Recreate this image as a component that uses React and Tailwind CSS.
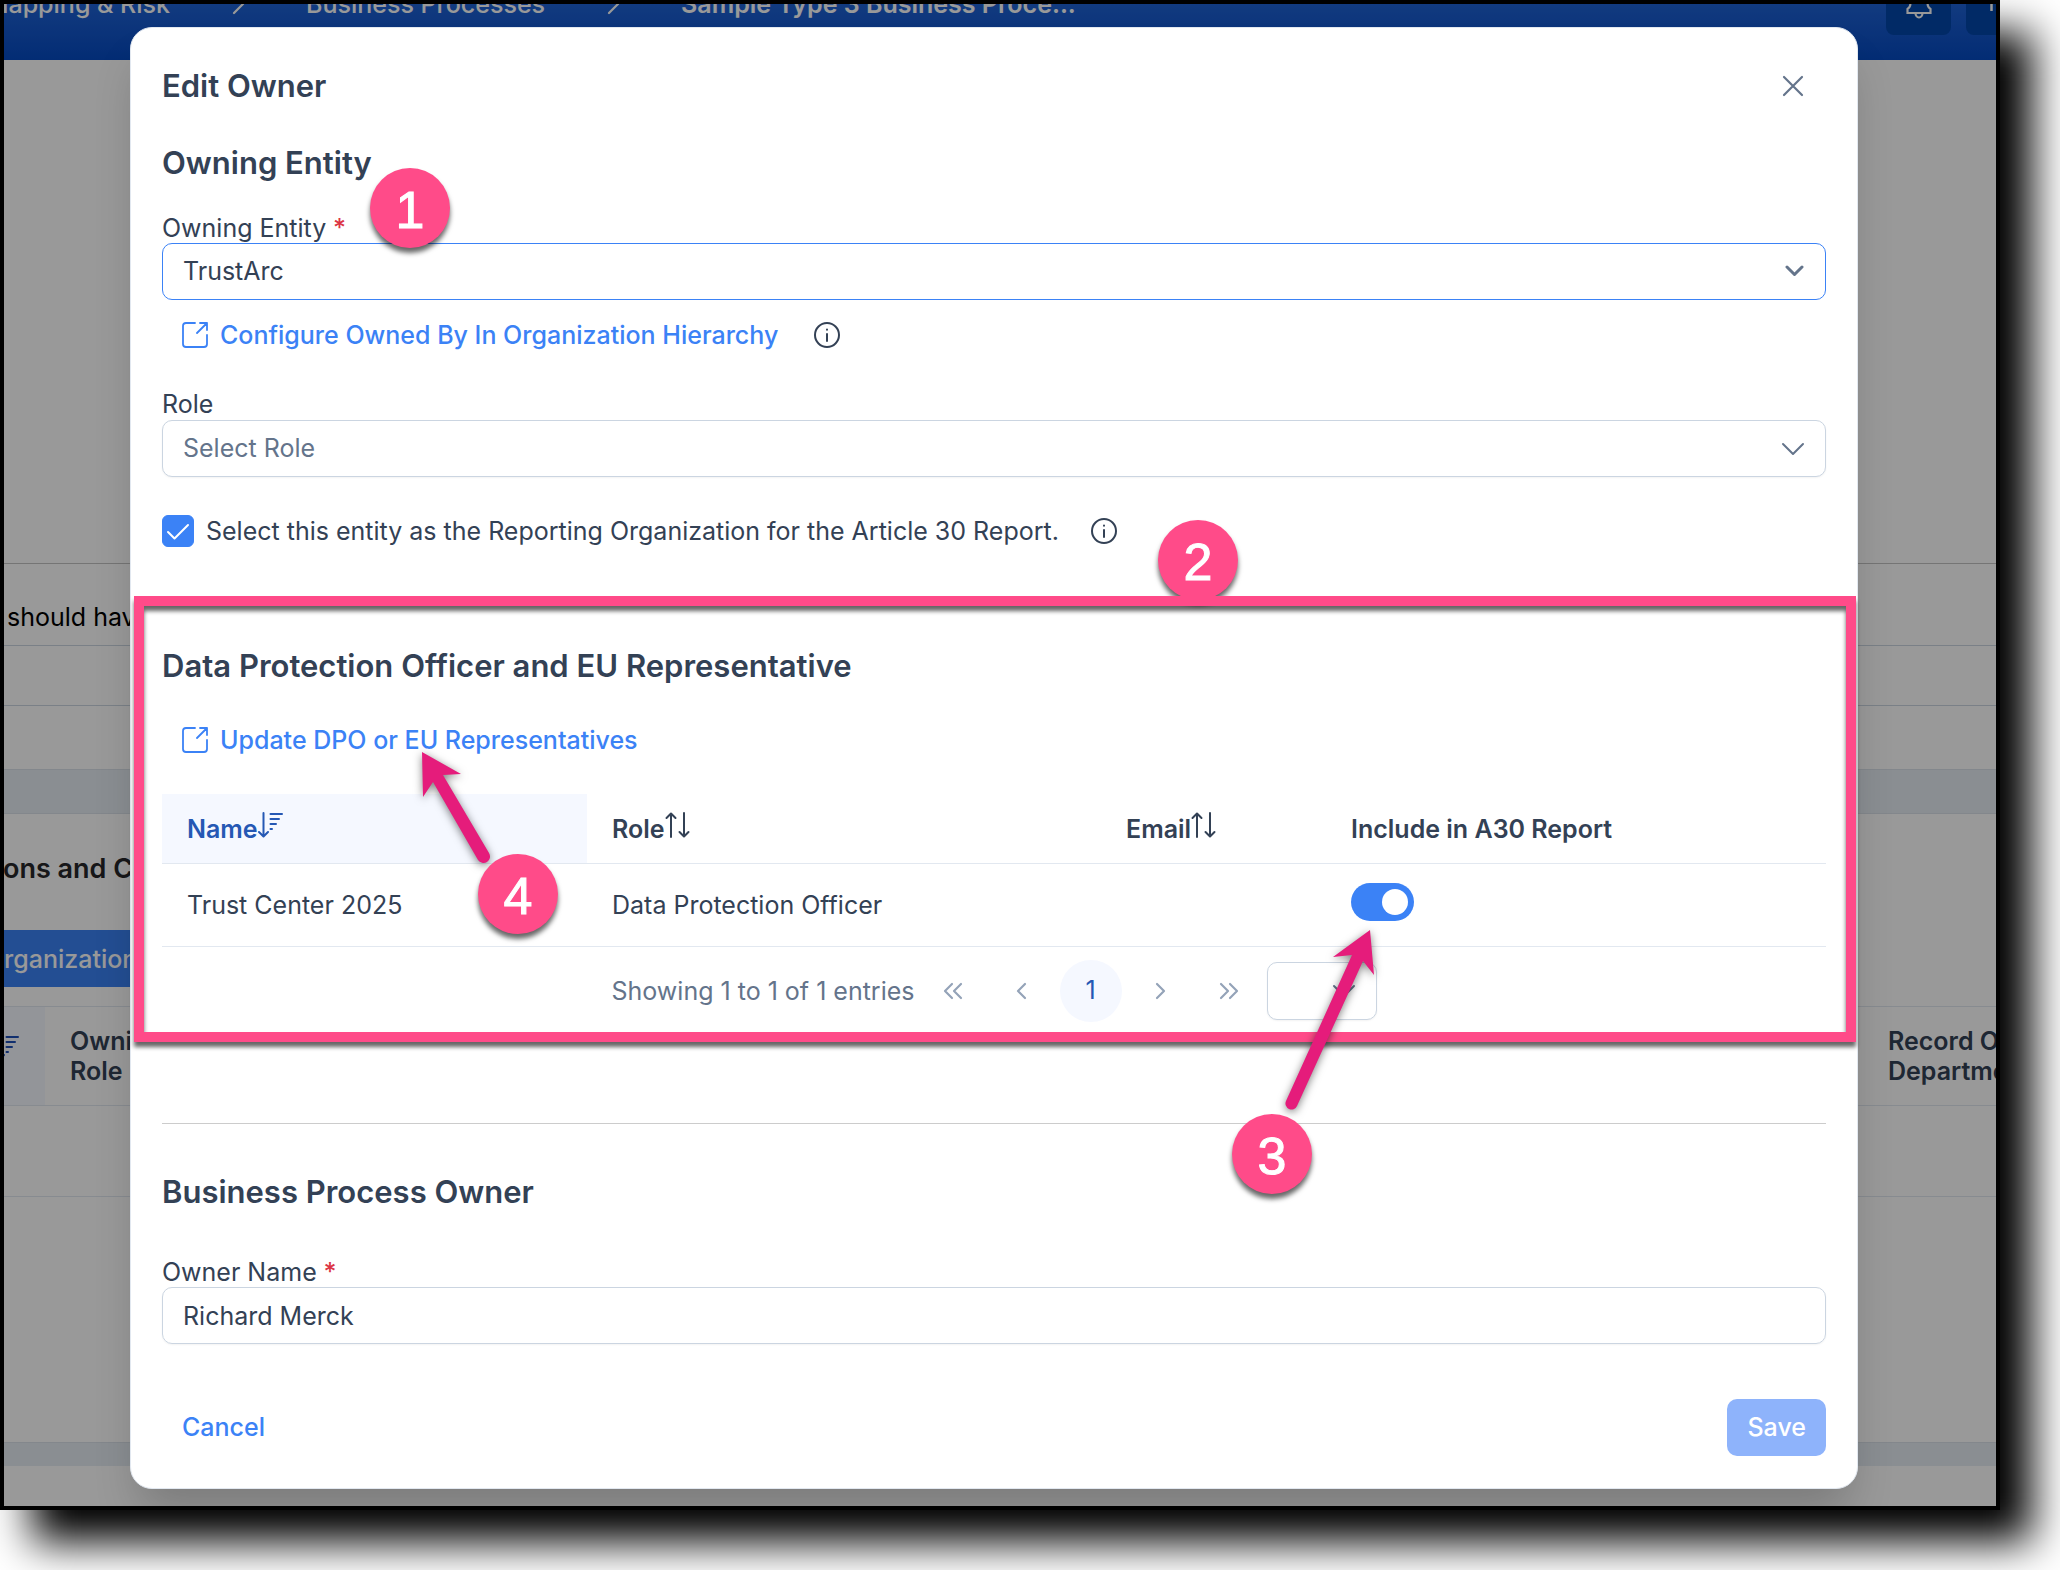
import React, { useState } from 'react';

const ExternalLinkIcon = () => (
    <svg className="h-[26px] w-[26px] shrink-0" viewBox="0 0 26 26" fill="none" stroke="currentColor" strokeWidth="1.8" strokeLinecap="round" strokeLinejoin="round">
        <path d="M13 1H4a3 3 0 0 0-3 3v18a3 3 0 0 0 3 3h18a3 3 0 0 0 3-3V13" />
        <path d="M18 1h7v7M25 1 15 11" />
    </svg>
);

const InfoIcon = () => (
    <svg className="h-[26px] w-[26px] shrink-0" viewBox="0 0 26 26" fill="none" stroke="currentColor" strokeWidth="2" strokeLinecap="round">
        <circle cx="13" cy="13" r="12" />
        <path d="M13 12v7M13 7.5v.3" />
    </svg>
);

const SortIcon = () => (
    <svg className="inline h-[26px] w-[25px] shrink-0 align-baseline" viewBox="0 0 25 26" fill="none" stroke="currentColor" strokeWidth="2" strokeLinecap="round" strokeLinejoin="round">
        <path d="M6 25V2M1.500 6 6 1.500 10.500 6" />
        <path d="M19 1v23M14.500 20 19 24.500 23.500 20" />
    </svg>
);

const SortAmountIcon = () => (
    <svg className="inline h-[26px] w-[25px] shrink-0 align-baseline" viewBox="0 0 25 26" fill="none" stroke="currentColor" strokeWidth="2" strokeLinecap="round" strokeLinejoin="round">
        <path d="M5.500 1v23M1 20l4.500 4.500L10 20" />
        <path d="M12.500 2H24M12.500 7H21M12.500 12H18M12.500 17H14" />
    </svg>
);

const Chevron = ({ d, className }) => (
    <svg className={className} viewBox="0 0 24 24" fill="none" stroke="currentColor" strokeWidth="2.200" strokeLinecap="round" strokeLinejoin="round">
        <path d={d} />
    </svg>
);

const Callout = ({ number, className }) => (
    <span className={`absolute z-20 flex h-20 w-20 items-center justify-center rounded-full bg-[#ff4b89] pt-1 font-['Liberation_Sans',sans-serif] text-[52px] leading-none text-white shadow-[0_5px_5px_rgba(0,0,0,0.6)] [-webkit-text-stroke:1px_white] ${className}`}>
        {number}
    </span>
);

const FieldLabel = ({ htmlFor, required, children }) => (
    <label htmlFor={htmlFor} className="block text-[25px] leading-[30px]">
        {children}
        {required && <span className="font-medium text-[#dc3545]"> *</span>}
    </label>
);

const PageButton = ({ label, d }) => (
    <button type="button" aria-label={label} className="flex h-[62px] w-[62px] items-center justify-center text-[#94a3b8]">
        <Chevron d={d} className="h-6 w-6" />
    </button>
);

// Page behind the dialog
const Backdrop = () => (
    <div className="absolute inset-0 flex flex-col overflow-hidden bg-white text-[25px] leading-[30px] text-[#27272a]">
        <header className="flex h-14 shrink-0 justify-between overflow-hidden bg-linear-to-b from-[#1e62d5] to-[#054ac2] text-white">
            <nav className="-mt-5 flex h-10 items-center whitespace-nowrap font-medium">
                <span className="flex w-[166px] justify-end">Mapping &amp; Risk</span>
                <Chevron d="M8 3l9 9-9 9" className="mx-14 h-6 w-6" />
                <span>Business Processes</span>
                <Chevron d="M8 3l9 9-9 9" className="mx-14 h-6 w-6" />
                <span className="font-semibold">Sample Type 3 Business Proce...</span>
            </nav>
            <div className="-mt-[33px] -mr-[35px] flex gap-[15px]">
                <button type="button" aria-label="Notifications" className="flex h-16 w-[65px] items-end justify-center rounded-lg bg-[#0346aa] pb-4">
                    <svg className="h-[30px] w-[26px]" viewBox="0 0 26 30" fill="none" stroke="currentColor" strokeWidth="2.200">
                        <path d="M1.500 24v-4c3-2 3-4 3-9a8.500 8.500 0 0 1 17 0c0 5 0 7 3 9v4zM9.500 24a3.500 4.500 0 0 0 7 0" />
                    </svg>
                </button>
                <button type="button" aria-label="Help" className="flex h-16 w-[65px] items-end justify-center rounded-lg bg-[#0346aa] pb-6">
                    <svg className="h-5 w-[18px]" viewBox="0 0 18 20" fill="none" stroke="currentColor" strokeWidth="2.500">
                        <path d="M1.500 0v20" />
                    </svg>
                </button>
            </div>
        </header>
        <div className="h-[504px] shrink-0 border-b border-[#c4c4c4]" />
        <p className="flex h-[82px] shrink-0 items-center border-b border-[#cbd5e1] pt-6 pl-[3px] text-black">should have</p>
        <div className="h-[60px] shrink-0 border-b border-[#cbd5e1]" />
        <div className="h-[63px] shrink-0" />
        <div className="h-[45px] shrink-0 border-y border-[#dbe2ea] bg-[#e7edf4]" />
        <h2 className="-ml-px flex h-[116px] shrink-0 items-center pb-[6px] text-[27px] font-semibold">ons and C</h2>
        <div className="flex h-[57px] w-[300px] shrink-0 items-center bg-[#3b82f6] font-medium text-white">rganization</div>
        <div className="mt-[19px] flex h-[100px] shrink-0 items-center justify-between border-y border-[#e2e8f0] font-semibold text-[#334155]">
            <div className="flex h-full items-center gap-[25px]">
                <div className="flex h-full w-[41px] items-center justify-end bg-[#f5f8ff] pr-[26px] pb-4 text-[#1d4fb8]">
                    <SortAmountIcon />
                </div>
                <p>Owning<br />Role</p>
            </div>
            <p className="w-[108px] overflow-hidden">
                <span className="block whitespace-nowrap">Record Of</span>
                <span className="block">Department</span>
            </p>
        </div>
        <div className="h-[91px] shrink-0 border-b border-[#e2e8f0]" />
        <div className="h-[245px] shrink-0" />
        <div className="h-6 shrink-0 border-t border-[#dbe2ea] bg-[#e7edf4]" />
        <div className="grow" />
    </div>
);

const OwningEntitySection = ({ reporting, setReporting }) => (
    <section className="relative mt-[37px]">
        <h2 className="text-[31px] leading-10 font-semibold">Owning Entity</h2>
        <div className="mt-[30px]">
            <FieldLabel htmlFor="owningEntity" required>Owning Entity</FieldLabel>
            <div className="relative">
                <select id="owningEntity" className="h-[57px] w-full appearance-none rounded-[10px] border border-[#3b82f6] bg-white px-5 text-[25px]">
                    <option>TrustArc</option>
                </select>
                <svg className="pointer-events-none absolute top-[22px] right-[22px] h-3 w-[19px] text-[#64748b]" viewBox="0 0 19 12" fill="none" stroke="currentColor" strokeWidth="3" strokeLinecap="round" strokeLinejoin="round">
                    <path d="M2 2l7.500 7.500L17 2" />
                </svg>
            </div>
        </div>
        <div className="mt-[19px] flex h-8 items-center pl-5">
            <a href="#hierarchy" className="flex items-center gap-3 text-[25px] leading-8 font-medium text-[#3b82f6]">
                <ExternalLinkIcon />
                Configure Owned By In Organization Hierarchy
            </a>
            <span className="ml-9"><InfoIcon /></span>
        </div>
        <div className="mt-[38px]">
            <FieldLabel htmlFor="role">Role</FieldLabel>
            <div className="relative mt-px">
                <select id="role" className="h-[57px] w-full appearance-none rounded-[10px] border border-[#cbd5e1] bg-white px-5 text-[25px] text-[#64748b] shadow-xs">
                    <option>Select Role</option>
                </select>
                <svg className="pointer-events-none absolute top-[22px] right-[21px] h-3.5 w-6 text-[#64748b]" viewBox="0 0 24 14" fill="none" stroke="currentColor" strokeWidth="2" strokeLinecap="round" strokeLinejoin="round">
                    <path d="M2 2l10 10L22 2" />
                </svg>
            </div>
        </div>
        <div className="mt-[38px] flex h-8 items-center">
            <span className="relative h-8 w-8">
                <input id="reporting" type="checkbox" checked={reporting} onChange={(e) => setReporting(e.target.checked)} className="block h-8 w-8 appearance-none rounded-md border border-[#cbd5e1] checked:border-[#3b82f6] checked:bg-[#3b82f6]" />
                {reporting && (
                    <svg className="pointer-events-none absolute inset-0 h-8 w-8" viewBox="0 0 32 32" fill="none" stroke="white" strokeWidth="2" strokeLinecap="round" strokeLinejoin="round">
                        <path d="M6 17l6.500 6.500L26 10" />
                    </svg>
                )}
            </span>
            <label htmlFor="reporting" className="ml-3 text-[25px] leading-8">Select this entity as the Reporting Organization for the Article 30 Report.</label>
            <span className="ml-8"><InfoIcon /></span>
        </div>
        <Callout number="1" className="top-[25px] left-[208px]" />
    </section>
);

const RepresentativeSection = ({ included, setIncluded }) => (
    <section className="relative mt-[99px]">
        <h2 className="text-[31px] leading-10 font-semibold">Data Protection Officer and EU Representative</h2>
        <a href="#representatives" className="mt-[38px] flex h-8 w-fit items-center gap-3 pl-5 text-[25px] leading-8 font-medium text-[#3b82f6]">
            <ExternalLinkIcon />
            Update DPO or EU Representatives
        </a>
        <table className="mt-[38px] w-full table-fixed border-separate border-spacing-0 text-left text-[25px] leading-8">
            <colgroup>
                <col className="w-[425px]" />
                <col className="w-[514px]" />
                <col className="w-[225px]" />
                <col />
            </colgroup>
            <thead>
                <tr className="h-[70px]">
                    <th className="border-b border-[#e2e8f0] bg-[#f5f8ff] px-[25px] font-semibold text-[#2558b4]">Name<SortAmountIcon /></th>
                    <th className="border-b border-[#e2e8f0] px-[25px] font-semibold">Role<SortIcon /></th>
                    <th className="border-b border-[#e2e8f0] px-[25px] font-semibold">Email<SortIcon /></th>
                    <th className="border-b border-[#e2e8f0] px-[25px] font-semibold">Include in A30 Report</th>
                </tr>
            </thead>
            <tbody>
                <tr className="h-[83px]">
                    <td className="border-b border-[#e2e8f0] px-[25px]">Trust Center 2025</td>
                    <td className="border-b border-[#e2e8f0] px-[25px]">Data Protection Officer</td>
                    <td className="border-b border-[#e2e8f0] px-[25px]"></td>
                    <td className="border-b border-[#e2e8f0] px-[25px] pb-[6px]">
                        <input type="checkbox" role="switch" aria-label="Include in A30 Report" checked={included} onChange={(e) => setIncluded(e.target.checked)} className="relative block h-[38px] w-[63px] appearance-none rounded-full bg-[#cbd5e1] before:absolute before:top-[6px] before:left-[6px] before:h-[26px] before:w-[26px] before:rounded-full before:bg-white checked:bg-[#3b82f6] checked:before:left-[31px]" />
                    </td>
                </tr>
            </tbody>
        </table>
        <div className="flex h-[88px] items-center justify-center gap-[7px]">
            <span className="text-[25px] leading-8 text-[#64748b]">Showing 1 to 1 of 1 entries</span>
            <PageButton label="First page" d="M11 5l-7 7 7 7M20 5l-7 7 7 7" />
            <PageButton label="Previous page" d="M15 5l-7 7 7 7" />
            <button type="button" className="h-[62px] w-[62px] rounded-full bg-[#f5f8ff] text-[25px] text-[#2558b4]">1</button>
            <PageButton label="Next page" d="M9 5l7 7-7 7" />
            <PageButton label="Last page" d="M4 5l7 7-7 7M13 5l7 7-7 7" />
            <div className="relative">
                <select aria-label="Rows per page" className="h-[58px] w-[110px] appearance-none rounded-[10px] border border-[#cbd5e1] bg-white shadow-xs" />
                <svg className="pointer-events-none absolute top-[22px] right-[21px] h-3.5 w-6 text-[#64748b]" viewBox="0 0 24 14" fill="none" stroke="currentColor" strokeWidth="2" strokeLinecap="round" strokeLinejoin="round">
                    <path d="M2 2l10 10L22 2" />
                </svg>
            </div>
        </div>

        {/* Annotations on top of the section */}
        <Callout number="2" className="-top-[126px] left-[996px]" />
        <div className="pointer-events-none absolute -top-[50px] -right-[30px] -bottom-[7px] -left-[28px] z-20 border-10 border-[#ff4b89] [filter:drop-shadow(0_5px_2px_rgba(0,0,0,0.6))]" />
        <svg className="pointer-events-none absolute top-[99px] left-[253px] z-20 h-[125px] w-[85px] overflow-visible [filter:drop-shadow(0_2px_4px_rgba(0,0,0,0.5))]" viewBox="415 745 85 125" fill="#e51c7b">
            <path d="M422 752l39 22-18 1 46 78a6 6 0 0 1-11 7l-45-78-10 15z" />
        </svg>
        <svg className="pointer-events-none absolute top-[277px] left-[1163px] z-20 h-[197px] w-[60px] overflow-visible [filter:drop-shadow(0_2px_4px_rgba(0,0,0,0.5))]" viewBox="1325 923 60 197" fill="#e51c7b">
            <path d="M1370 930l4 45-11-14-66 145a6 6 0 0 1-11-5l66-146-19 2z" />
        </svg>
        <Callout number="3" className="top-[468px] left-[1070px]" />
        <Callout number="4" className="top-[208px] left-[316px]" />
    </section>
);

const App = () => {
    const [reporting, setReporting] = useState(true);
    const [included, setIncluded] = useState(true);
    const [ownerName, setOwnerName] = useState('Richard Merck');

    return (
        <div className="flex min-h-screen overflow-hidden bg-white pr-[60px] pb-[60px] font-[Inter,sans-serif]">
            <div className="relative grow border-4 border-black shadow-[32px_32px_40px_#000]">
                <Backdrop />
                <div className="absolute inset-0 bg-black/40" />
                <div className="absolute inset-0 flex overflow-hidden pt-[23px] pr-[138px] pb-[17px] pl-[126px]">
                    <div className="grow rounded-[22px] shadow-[0_30px_45px_-9px_rgba(0,0,0,0.2)]" />
                </div>
                <div role="dialog" aria-labelledby="dialogTitle" className="relative mt-[23px] mr-[138px] mb-[17px] ml-[126px] rounded-[22px] border border-[#e2e8f0] bg-white px-[31px] pt-[38px] pb-8 text-[#334155]">
                    <div className="flex h-10 items-center justify-between">
                        <h1 id="dialogTitle" className="text-[31px] leading-10 font-semibold">Edit Owner</h1>
                        <button type="button" aria-label="Close" className="mr-[22px] text-[#64748b]">
                            <svg className="h-[22px] w-[22px]" viewBox="0 0 22 22" fill="none" stroke="currentColor" strokeWidth="2.200" strokeLinecap="round">
                                <path d="M2 2l18 18M20 2 2 20" />
                            </svg>
                        </button>
                    </div>
                    <OwningEntitySection reporting={reporting} setReporting={setReporting} />
                    <RepresentativeSection included={included} setIncluded={setIncluded} />
                    <hr className="mt-[88px] border-[#ccc]" />
                    <section className="mt-12">
                        <h2 className="text-[31px] leading-10 font-semibold">Business Process Owner</h2>
                        <div className="mt-[45px]">
                            <FieldLabel htmlFor="ownerName" required>Owner Name</FieldLabel>
                            <input id="ownerName" type="text" value={ownerName} onChange={(e) => setOwnerName(e.target.value)} className="block h-[57px] w-full rounded-[10px] border border-[#cbd5e1] px-5 text-[25px] shadow-xs" />
                        </div>
                    </section>
                    <div className="mt-[55px] flex h-[57px] items-center justify-between text-[25px] font-medium">
                        <button type="button" className="h-full px-5 text-[#3b82f6]">Cancel</button>
                        <button type="button" className="h-full rounded-[10px] bg-[#8eb3fb] px-5 text-white">Save</button>
                    </div>
                </div>
            </div>
        </div>
    );
};

export default App;
